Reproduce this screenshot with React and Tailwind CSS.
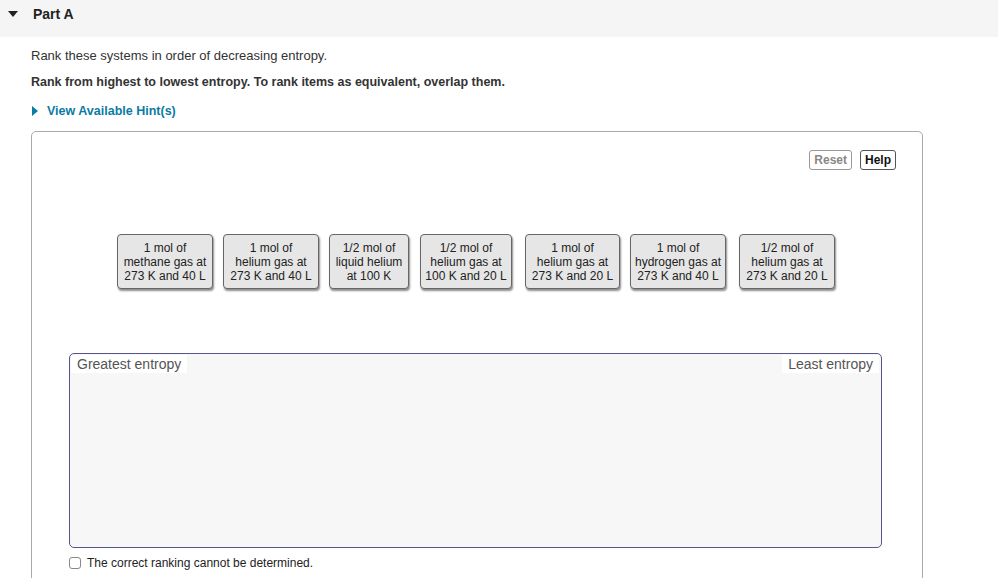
import React from "react";

const tiles = [
  { w: "w-[96px]", ml: "", lines: ["1 mol of", "methane gas at", "273 K and 40 L"] },
  { w: "w-[96px]", ml: "ml-[10px]", lines: ["1 mol of", "helium gas at", "273 K and 40 L"] },
  { w: "w-[80px]", ml: "ml-[10px]", lines: ["1/2 mol of", "liquid helium", "at 100 K"] },
  { w: "w-[92px]", ml: "ml-[11px]", lines: ["1/2 mol of", "helium gas at", "100 K and 20 L"] },
  { w: "w-[95px]", ml: "ml-[13px]", lines: ["1 mol of", "helium gas at", "273 K and 20 L"] },
  { w: "w-[96px]", ml: "ml-[10px]", lines: ["1 mol of", "hydrogen gas at", "273 K and 40 L"] },
  { w: "w-[96px]", ml: "ml-[13px]", lines: ["1/2 mol of", "helium gas at", "273 K and 20 L"] },
];

const Tile = ({ w, ml, lines }) => (
  <div
    className={`${w} ${ml} h-[55px] shrink-0 flex flex-col items-center justify-center rounded-[4px] border border-[#666] bg-[#e6e6e6] shadow-[1px_2px_2px_rgba(0,0,0,0.45)] text-[12px] leading-[14px] text-[#222]`}
  >
    {lines.map((l) => (
      <span key={l} className="whitespace-nowrap">{l}</span>
    ))}
  </div>
);

export default function App() {
  return (
    <div className="w-[998px] h-[578px] overflow-hidden bg-white font-['Liberation_Sans',Arial,sans-serif] text-[#333]">
      <header className="h-[37px] bg-[#f5f5f5] flex items-start pt-[5px]">
        <svg width="10" height="6" viewBox="0 0 10 6" className="ml-[8px] mt-[6px]">
          <polygon points="0,0 10,0 5,6" fill="#222" />
        </svg>
        <h2 className="ml-[15px] text-[14px] leading-[18px] font-bold text-[#222]">Part A</h2>
      </header>

      <div className="pl-[31px]">
        <p className="mt-[10px] text-[13px] text-[#333] leading-[18px]">
          Rank these systems in order of decreasing entropy.
        </p>
        <p className="mt-[8px] text-[12.5px] font-bold text-[#333] leading-[18px]">
          Rank from highest to lowest entropy. To rank items as equivalent, overlap them.
        </p>
        <button className="mt-[11px] flex items-center gap-[9px] text-[12.5px] font-bold text-[#0c7ba3] leading-[18px]">
          <svg width="6" height="10" viewBox="0 0 6 10" className="ml-[1px]">
            <polygon points="0,0 6,5 0,10" fill="#0c7ba3" />
          </svg>
          View Available Hint(s)
        </button>

        <div className="mt-[11px] w-[892px] h-[460px] rounded-[5px] border border-[#aaa] pt-[18px] px-[37px]">
          <div className="flex justify-end gap-[8px]">
            <button className="h-[20px] px-[4px] rounded-[3px] border border-[#999] text-[12px] font-bold text-[#888] leading-none">
              Reset
            </button>
            <button className="h-[20px] px-[4px] rounded-[3px] border border-[#555] text-[12px] font-bold text-[#111] leading-none mr-[-11px]">
              Help
            </button>
          </div>

          <div className="mt-[64px] ml-[48px] flex">
            {tiles.map((t, i) => (
              <Tile key={i} {...t} />
            ))}
          </div>

          <div className="mt-[64px] h-[195px] w-[813px] rounded-[5px] border border-[#55558a] bg-[#f7f7f7] p-[1px] flex justify-between items-start">
            <span className="bg-white px-[6px] h-[18px] flex items-center text-[14px] text-[#555]">
              Greatest entropy
            </span>
            <span className="bg-white px-[6px] h-[18px] flex items-center text-[14px] text-[#555] mr-[1px]">
              Least entropy
            </span>
          </div>

          <label className="mt-[6px] flex items-center gap-[6px] text-[12px] text-[#222]">
            <span className="w-[12px] h-[12px] rounded-[3px] border border-[#888] bg-white" />
            The correct ranking cannot be determined.
          </label>
        </div>
      </div>
    </div>
  );
}
